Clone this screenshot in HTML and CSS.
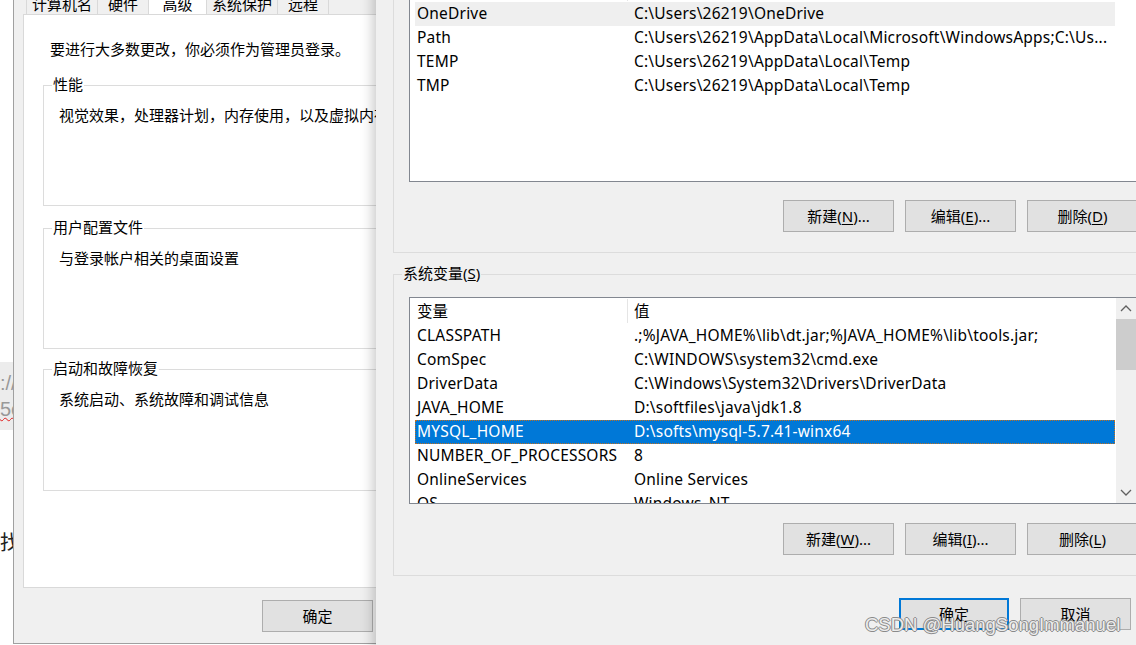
FILE: index.html
```html
<!DOCTYPE html>
<html>
<head>
  <title>环境变量</title>
  <link rel="stylesheet" href="styles.css">
</head>
<body>
  <div class="behind">
    <div class="behind-band">
      <p class="behind-url">://</p>
      <p class="behind-typo">5c</p>
    </div>
    <p class="behind-word">找</p>
  </div>

  <div class="dialog sysprops">
    <div class="tabs">
      <span class="tab">计算机名</span>
      <span class="tab">硬件</span>
      <span class="tab tab-active">高级</span>
      <span class="tab">系统保护</span>
      <span class="tab">远程</span>
    </div>
    <div class="tab-panel">
      <p class="note">要进行大多数更改，你必须作为管理员登录。</p>
      <div class="group group-first">
        <span class="group-title">性能</span>
        <p class="group-text">视觉效果，处理器计划，内存使用，以及虚拟内存</p>
      </div>
      <div class="group group-second">
        <span class="group-title">用户配置文件</span>
        <p class="group-text">与登录帐户相关的桌面设置</p>
      </div>
      <div class="group group-third">
        <span class="group-title">启动和故障恢复</span>
        <p class="group-text">系统启动、系统故障和调试信息</p>
      </div>
    </div>
    <div class="sysprops-buttons">
      <button class="btn">确定</button>
    </div>
  </div>

  <div class="dialog envvars">
    <div class="var-group user-group">
      <span class="group-title">26219 的用户变量(<u>U</u>)</span>
      <div class="listview">
        <div class="list-body">
          <div class="row list-head"><span class="col-name">变量</span><span class="col-value">值</span></div>
          <div class="row row-hover"><span class="col-name">OneDrive</span><span class="col-value">C:\Users\26219\OneDrive</span></div>
          <div class="row"><span class="col-name">Path</span><span class="col-value">C:\Users\26219\AppData\Local\Microsoft\WindowsApps;C:\Us...</span></div>
          <div class="row"><span class="col-name">TEMP</span><span class="col-value">C:\Users\26219\AppData\Local\Temp</span></div>
          <div class="row"><span class="col-name">TMP</span><span class="col-value">C:\Users\26219\AppData\Local\Temp</span></div>
        </div>
      </div>
      <div class="btn-row">
        <button class="btn">新建(<u>N</u>)...</button>
        <button class="btn">编辑(<u>E</u>)...</button>
        <button class="btn">删除(<u>D</u>)</button>
      </div>
    </div>

    <div class="var-group system-group">
      <span class="group-title">系统变量(<u>S</u>)</span>
      <div class="listview">
        <div class="list-body">
          <div class="row list-head"><span class="col-name">变量</span><span class="col-value">值</span></div>
          <div class="row"><span class="col-name">CLASSPATH</span><span class="col-value">.;%JAVA_HOME%\lib\dt.jar;%JAVA_HOME%\lib\tools.jar;</span></div>
          <div class="row"><span class="col-name">ComSpec</span><span class="col-value">C:\WINDOWS\system32\cmd.exe</span></div>
          <div class="row"><span class="col-name">DriverData</span><span class="col-value">C:\Windows\System32\Drivers\DriverData</span></div>
          <div class="row"><span class="col-name">JAVA_HOME</span><span class="col-value">D:\softfiles\java\jdk1.8</span></div>
          <div class="row row-selected"><span class="col-name">MYSQL_HOME</span><span class="col-value">D:\softs\mysql-5.7.41-winx64</span></div>
          <div class="row"><span class="col-name">NUMBER_OF_PROCESSORS</span><span class="col-value">8</span></div>
          <div class="row"><span class="col-name">OnlineServices</span><span class="col-value">Online Services</span></div>
          <div class="row"><span class="col-name">OS</span><span class="col-value">Windows_NT</span></div>
        </div>
        <div class="scrollbar">
          <svg class="arrow" width="20" height="21" viewBox="0 0 20 21"><path d="M5 13 L10 8 L15 13" fill="none" stroke="#606060" stroke-width="1.3"/></svg>
          <div class="thumb"></div>
          <div class="track"></div>
          <svg class="arrow" width="20" height="21" viewBox="0 0 20 21"><path d="M5 8 L10 13 L15 8" fill="none" stroke="#606060" stroke-width="1.3"/></svg>
        </div>
      </div>
      <div class="btn-row">
        <button class="btn">新建(<u>W</u>)...</button>
        <button class="btn">编辑(<u>I</u>)...</button>
        <button class="btn">删除(<u>L</u>)</button>
      </div>
    </div>

    <div class="envvars-buttons">
      <button class="btn btn-default">确定</button>
      <button class="btn">取消</button>
    </div>
  </div>

  <div class="watermark">CSDN @HuangSongImmanuel</div>
</body>
</html>
```

FILE: styles.css
```css
body {
  margin: 0;
  width: 1136px;
  height: 645px;
  overflow: hidden;
  position: relative;
  background-color: #fff;
  font-family: "Noto Sans", "Noto Sans CJK SC", sans-serif;
  font-size: 15px;
  color: #000;
}

p {
  margin: 0;
}

/* window behind the dialogs */
.behind {
  width: 13px;
  overflow: hidden;
  padding-top: 362px;
  color: #999;
  font-family: "Liberation Sans", "Noto Sans CJK SC", sans-serif;
  font-size: 20px;
}

.behind-band {
  background-color: #ececec;
  height: 68px;
  padding-top: 8px;
  box-sizing: border-box;
}

.behind-url {
  line-height: 26px;
}

.behind-typo {
  line-height: 26px;
  text-decoration: underline wavy #e02020;
  text-decoration-thickness: 1px;
}

.behind-word {
  margin-top: 100px;
  color: #222;
  line-height: 26px;
}

/* dialogs */
.dialog {
  position: absolute;
  background-color: #f0f0f0;
  box-sizing: border-box;
}

.sysprops {
  left: 13px;
  top: -10px;
  width: 420px;
  height: 654px;
  border-left: 1px solid #a0a0a0;
  border-bottom: 1px solid #a0a0a0;
}

.tabs {
  display: flex;
  height: 24px;
  margin-left: 12px;
}

.tab {
  box-sizing: border-box;
  min-width: 51px;
  padding: 0 5px;
  height: 24px;
  line-height: 26px;
  text-align: center;
  border: 1px solid #d9d9d9;
  border-bottom: none;
  border-left: none;
  background-color: #f0f0f0;
  color: #000;
}

.tab:first-child {
  border-left: 1px solid #d9d9d9;
}

.tab-active {
  min-width: 58px;
  background-color: #fff;
}

.tab-panel {
  box-sizing: border-box;
  margin-left: 9px;
  height: 574px;
  background-color: #fff;
  border: 1px solid #d9d9d9;
  overflow: hidden;
}

.note {
  margin: 24px 0 0 26px;
  line-height: 20px;
}

.group {
  box-sizing: border-box;
  width: 420px;
  height: 121px;
  margin-left: 19px;
  border: 1px solid #dcdcdc;
}

.group-first {
  margin-top: 26px;
}

.group-second {
  margin-top: 22px;
}

.group-third {
  margin-top: 20px;
  height: 122px;
}

.group-title {
  display: block;
  width: fit-content;
  margin: -12px 0 0 8px;
  padding: 0 1px;
  line-height: 20px;
  background-color: #fff;
  white-space: nowrap;
}

.group-text {
  margin: 11px 0 0 15px;
  line-height: 20px;
  white-space: nowrap;
}

.sysprops-buttons {
  margin: 12px 0 0 248px;
}

.btn {
  box-sizing: border-box;
  width: 111px;
  height: 32px;
  padding: 0 0 2px;
  background-color: #e1e1e1;
  border: 1px solid #adadad;
  border-radius: 0;
  font-family: "Noto Sans", "Noto Sans CJK SC", sans-serif;
  font-size: 15px;
  color: #000;
}

.btn u {
  text-underline-offset: 2px;
}

.btn-default {
  border: 2px solid #0078d7;
  width: 110px;
}

/* environment variables */
.envvars {
  left: 376px;
  top: -70px;
  width: 800px;
  height: 760px;
  padding-top: 10px;
  box-shadow: -3px 0 12px rgba(0, 0, 0, 0.22);
}

.var-group {
  box-sizing: border-box;
  width: 780px;
  margin-left: 17px;
  border: 1px solid #dcdcdc;
  padding-bottom: 20px;
}

.var-group .group-title {
  background-color: #f0f0f0;
}

.system-group {
  margin-top: 21px;
}

.listview {
  box-sizing: border-box;
  display: flex;
  width: 728px;
  height: 207px;
  margin-left: 15px;
  background-color: #fff;
  border: 1px solid #828790;
  overflow: hidden;
}

.user-group .listview {
  margin-top: 26px;
}

.system-group .listview {
  margin-top: 14px;
}

.list-body {
  width: 706px;
  overflow: hidden;
}

.row {
  display: grid;
  grid-template-columns: 213px 487px;
  width: 700px;
  height: 24px;
  line-height: 22px;
  margin-left: 5px;
  white-space: nowrap;
  box-sizing: border-box;
  font-size: 15.5px;
  letter-spacing: 0.2px;
}

.list-head {
  height: 26px;
  line-height: 26px;
  letter-spacing: 0;
}

.list-head .col-name {
  border-right: 1px solid #e5e5e5;
  margin: 1px 0;
  line-height: 24px;
}

.col-name {
  padding-left: 2px;
  overflow: visible;
}

.col-value {
  padding-left: 6px;
  overflow: hidden;
}

.row-hover {
  background-color: #efefef;
}

.row-selected {
  background-color: #0078d7;
  color: #fff;
  outline: 1px dotted #c07020;
  outline-offset: -1px;
}

.scrollbar {
  display: flex;
  flex-direction: column;
  width: 20px;
  background-color: #f0f0f0;
}

.arrow {
  display: block;
  flex: none;
}

.thumb {
  height: 51px;
  background-color: #cdcdcd;
}

.track {
  flex: 1;
}

.btn-row {
  display: flex;
  gap: 11px;
  padding-left: 389px;
  margin-top: 18px;
}

.system-group .btn-row {
  margin-top: 19px;
}

.envvars-buttons {
  display: flex;
  gap: 11px;
  margin: 22px 0 0 523px;
}

.watermark {
  position: absolute;
  left: 865px;
  top: 612px;
  font-family: "Liberation Sans", sans-serif;
  font-size: 18.5px;
  line-height: 26px;
  color: rgba(255, 255, 255, 0.85);
  text-shadow: 1px 0 0 #8a8a8a, -1px 0 0 #8a8a8a, 0 1px 0 #8a8a8a, 0 -1px 0 #8a8a8a;
}
```
